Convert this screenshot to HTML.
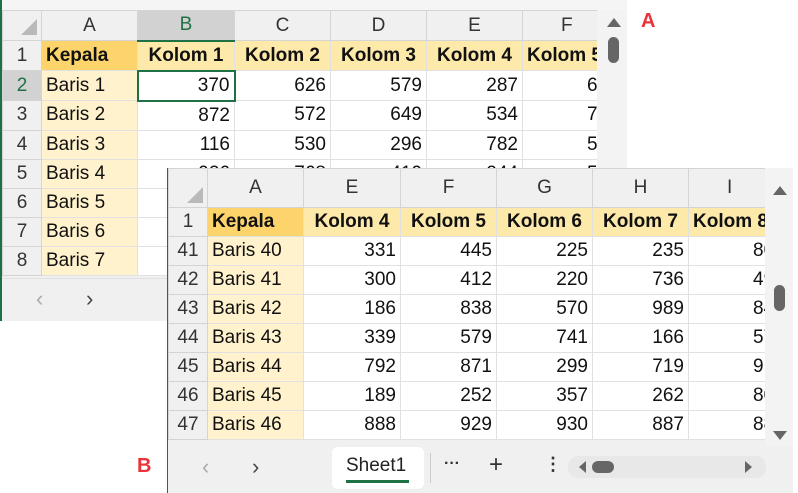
<!DOCTYPE html>
<html><head><style>
body{margin:0;width:798px;height:493px;background:#fff;position:relative;overflow:hidden;font-family:"Liberation Sans",Arial,sans-serif;}
.p{position:absolute;background:#fff;overflow:hidden}
table{border-collapse:collapse;position:absolute;table-layout:fixed}
td{height:28px;border:1px solid #e1e1e1;font-size:19px;padding:0 4px;white-space:nowrap;overflow:hidden;color:#111;background:#fff}
td.h{background:#f0f0f0;color:#333;text-align:center;border-color:#d4d4d4}
td.n{text-align:right}
td.k{background:#fde9a9;font-weight:bold;text-align:center}
td.kk{background:#fcd46b;font-weight:bold}
td.a{background:#fff2cc}
.tri{width:0;height:0;border-left:16px solid transparent;border-bottom:16px solid #b9b9b9;position:absolute}
.sb{position:absolute;background:#f3f3f3}
</style></head><body>
<!-- A -->
<div class="p" style="left:0;top:0;width:627px;height:321px;background:#f0f0f0;border-left:2px solid #1e7145;box-sizing:border-box">
<div style="position:absolute;left:0;top:0;width:627px;height:10px;background:#f5f5f5"></div>
<table style="left:0;top:10px;width:620px">
<colgroup><col style="width:39px"><col style="width:96px"><col style="width:97px"><col style="width:96px"><col style="width:96px"><col style="width:96px"><col style="width:100px"></colgroup>
<tr><td class="h" style="height:29px;position:relative"><div class="tri" style="left:18px;top:8px"></div></td><td class="h">A</td><td class="h" style="background:#d2d2d2;color:#1e7145;border-bottom:2px solid #1e7145">B</td><td class="h">C</td><td class="h">D</td><td class="h">E</td><td class="h" style="text-align:left;padding-left:38px">F</td></tr>
<tr><td class="h">1</td><td class="kk">Kepala</td><td class="k">Kolom 1</td><td class="k">Kolom 2</td><td class="k">Kolom 3</td><td class="k">Kolom 4</td><td class="k" style="text-align:left">Kolom 5</td></tr>
<tr><td class="h" style="background:#d2d2d2;color:#1e7145">2</td><td class="a">Baris 1</td><td class="n" style="border:2px solid #1e7145">370</td><td class="n">626</td><td class="n">579</td><td class="n">287</td><td class="n" style="text-align:left;padding-left:64px">617</td></tr>
<tr><td class="h">3</td><td class="a">Baris 2</td><td class="n">872</td><td class="n">572</td><td class="n">649</td><td class="n">534</td><td class="n" style="text-align:left;padding-left:64px">760</td></tr>
<tr><td class="h">4</td><td class="a">Baris 3</td><td class="n">116</td><td class="n">530</td><td class="n">296</td><td class="n">782</td><td class="n" style="text-align:left;padding-left:64px">545</td></tr>
<tr><td class="h">5</td><td class="a">Baris 4</td><td class="n">926</td><td class="n">768</td><td class="n">410</td><td class="n">244</td><td class="n" style="text-align:left;padding-left:64px">560</td></tr>
<tr><td class="h">6</td><td class="a">Baris 5</td><td></td><td></td><td></td><td></td><td></td></tr>
<tr><td class="h">7</td><td class="a">Baris 6</td><td></td><td></td><td></td><td></td><td></td></tr>
<tr><td class="h">8</td><td class="a">Baris 7</td><td></td><td></td><td></td><td></td><td></td></tr>
</table>
<div class="sb" style="left:595px;top:10px;width:32px;height:270px"></div>
<div style="position:absolute;left:605px;top:18px;border-left:7px solid transparent;border-right:7px solid transparent;border-bottom:9px solid #666"></div>
<div style="position:absolute;left:606px;top:37px;width:11px;height:26px;border-radius:6px;background:#666"></div>
<div style="position:absolute;left:0;top:278px;width:627px;height:43px;background:#f0f0f0;border-top:1px solid #e0e0e0"></div>
<div style="position:absolute;left:34px;top:286px;font-size:22px;color:#aaa">&#8249;</div>
<div style="position:absolute;left:84px;top:286px;font-size:22px;color:#444">&#8250;</div>
</div>
<div style="position:absolute;left:641px;top:10px;color:#e8333a;font-weight:bold;font-size:20px">A</div>
<div style="position:absolute;left:137px;top:455px;color:#e8333a;font-weight:bold;font-size:20px">B</div>
<!-- B -->
<div class="p" style="left:167px;top:168px;width:626px;height:325px;background:#f0f0f0;border-left:1px solid #1e7145;box-sizing:border-box">
<table style="left:0;top:0;width:620px">
<colgroup><col style="width:39px"><col style="width:96px"><col style="width:97px"><col style="width:96px"><col style="width:96px"><col style="width:96px"><col style="width:100px"></colgroup>
<tr><td class="h" style="height:38px;position:relative"><div class="tri" style="left:18px;top:18px"></div></td><td class="h">A</td><td class="h">E</td><td class="h">F</td><td class="h">G</td><td class="h">H</td><td class="h" style="text-align:left;padding-left:38px">I</td></tr>
<tr><td class="h">1</td><td class="kk">Kepala</td><td class="k">Kolom 4</td><td class="k">Kolom 5</td><td class="k">Kolom 6</td><td class="k">Kolom 7</td><td class="k" style="text-align:left">Kolom 8</td></tr>
<tr><td class="h">41</td><td class="a">Baris 40</td><td class="n">331</td><td class="n">445</td><td class="n">225</td><td class="n">235</td><td class="n" style="text-align:left;padding-left:64px">801</td></tr>
<tr><td class="h">42</td><td class="a">Baris 41</td><td class="n">300</td><td class="n">412</td><td class="n">220</td><td class="n">736</td><td class="n" style="text-align:left;padding-left:64px">495</td></tr>
<tr><td class="h">43</td><td class="a">Baris 42</td><td class="n">186</td><td class="n">838</td><td class="n">570</td><td class="n">989</td><td class="n" style="text-align:left;padding-left:64px">842</td></tr>
<tr><td class="h">44</td><td class="a">Baris 43</td><td class="n">339</td><td class="n">579</td><td class="n">741</td><td class="n">166</td><td class="n" style="text-align:left;padding-left:64px">573</td></tr>
<tr><td class="h">45</td><td class="a">Baris 44</td><td class="n">792</td><td class="n">871</td><td class="n">299</td><td class="n">719</td><td class="n" style="text-align:left;padding-left:64px">910</td></tr>
<tr><td class="h">46</td><td class="a">Baris 45</td><td class="n">189</td><td class="n">252</td><td class="n">357</td><td class="n">262</td><td class="n" style="text-align:left;padding-left:64px">803</td></tr>
<tr><td class="h">47</td><td class="a">Baris 46</td><td class="n">888</td><td class="n">929</td><td class="n">930</td><td class="n">887</td><td class="n" style="text-align:left;padding-left:64px">889</td></tr>
</table>
<div class="sb" style="left:597px;top:0;width:29px;height:280px"></div>
<div style="position:absolute;left:605px;top:18px;border-left:7px solid transparent;border-right:7px solid transparent;border-bottom:9px solid #666"></div>
<div style="position:absolute;left:606px;top:117px;width:11px;height:26px;border-radius:6px;background:#666"></div>
<div style="position:absolute;left:605px;top:263px;border-left:7px solid transparent;border-right:7px solid transparent;border-top:9px solid #666"></div>
<div style="position:absolute;left:0;top:278px;width:626px;height:47px;background:#f0f0f0"></div>
<div style="position:absolute;left:34px;top:286px;font-size:22px;color:#aaa">&#8249;</div>
<div style="position:absolute;left:84px;top:286px;font-size:22px;color:#444">&#8250;</div>
<div style="position:absolute;left:164px;top:279px;width:92px;height:42px;background:#fff;border-radius:6px"></div>
<div style="position:absolute;left:178px;top:287px;font-size:19px;color:#222">Sheet1</div>
<div style="position:absolute;left:178px;top:312px;width:63px;height:3px;background:#1e7145"></div>
<div style="position:absolute;left:262px;top:285px;width:1px;height:30px;background:#ccc"></div>
<div style="position:absolute;left:276px;top:287px;font-size:16px;font-weight:bold;color:#333">&middot;&middot;&middot;</div>
<div style="position:absolute;left:321px;top:283px;font-size:24px;color:#333">+</div>
<div style="position:absolute;left:376px;top:286px;font-size:18px;font-weight:bold;color:#333">&#8942;</div>
<div style="position:absolute;left:400px;top:288px;width:198px;height:22px;background:#e8e8e8;border-radius:10px"></div>
<div style="position:absolute;left:411px;top:293px;border-top:6px solid transparent;border-bottom:6px solid transparent;border-right:7px solid #666"></div>
<div style="position:absolute;left:424px;top:293px;width:22px;height:12px;border-radius:6px;background:#666"></div>
<div style="position:absolute;left:577px;top:293px;border-top:6px solid transparent;border-bottom:6px solid transparent;border-left:7px solid #666"></div>
</div>
</body></html>
